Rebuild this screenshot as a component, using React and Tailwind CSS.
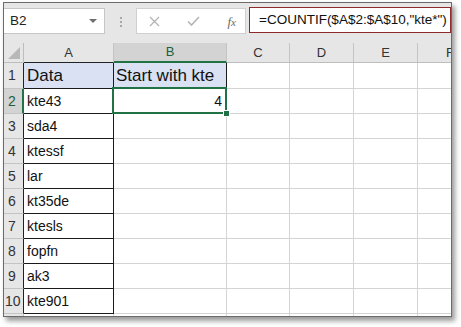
import React from "react";

const font = { fontFamily: '"Liberation Sans", Arial, sans-serif' };

const cols = [
  { key: "A", w: "w-[90px]" },
  { key: "B", w: "w-[113px]" },
  { key: "C", w: "w-[63px]" },
  { key: "D", w: "w-[64px]" },
  { key: "E", w: "w-[64px]" },
];

const data = ["kte43", "sda4", "ktessf", "lar", "kt35de", "ktesls", "fopfn", "ak3", "kte901"];

const Toolbar = () => (
  <div className="h-[40px] bg-[#e6e6e6] flex items-start relative">
    {/* name box */}
    <div className="mt-[5px] h-[26px] w-[101px] bg-white border-y border-r border-[#c6c6c6] flex items-center justify-between pl-[6px] pr-[7px]">
      <span className="text-[13.5px] text-[#222]">B2</span>
      <span className="w-0 h-0 border-x-[4px] border-x-transparent border-t-[4px] border-t-[#6f6f6f]" />
    </div>
    {/* grip dots */}
    <div className="w-[31px] flex flex-col items-center gap-[2px] mt-[14px]">
      <span className="w-[2px] h-[2px] bg-[#a8a8a8]" />
      <span className="w-[2px] h-[2px] bg-[#a8a8a8]" />
      <span className="w-[2px] h-[2px] bg-[#a8a8a8]" />
    </div>
    {/* cancel / enter / fx */}
    <div className="mt-[5px] h-[26px] w-[110px] bg-white border border-[#d0d0d0] flex items-center justify-between pl-[12px] pr-[9px]">
      <svg width="11" height="11" viewBox="0 0 11 11">
        <path d="M1 1 L10 10 M10 1 L1 10" stroke="#b4b4b4" strokeWidth="1.3" fill="none" />
      </svg>
      <svg width="13" height="10" viewBox="0 0 13 10">
        <path d="M1 5.5 L4.5 9 L12 1" stroke="#b4b4b4" strokeWidth="1.6" fill="none" />
      </svg>
      <span
        className="text-[13px] italic text-[#6a6a6a] leading-none"
        style={{ fontFamily: '"Liberation Serif", "Times New Roman", serif' }}
      >
        f<span className="text-[11px]">x</span>
      </span>
    </div>
    {/* formula box */}
    <div className="ml-[3px] mt-[4px] h-[26px] flex-1 bg-white border-[1.5px] border-[#8e2a2a] flex items-center pl-[9px] overflow-hidden">
      <span className="text-[13.5px] text-[#111] whitespace-nowrap">=COUNTIF($A$2:$A$10,"kte*")</span>
    </div>
  </div>
);

const HeaderRow = () => (
  <div className="flex h-[20px]">
    <div className="w-[20px] h-full bg-[#e6e6e6] border-r border-b border-[#bdbdbd] relative">
      <span className="absolute right-[3px] bottom-[3px] w-0 h-0 border-l-[12px] border-l-transparent border-b-[12px] border-b-[#b8b8b8]" />
    </div>
    {cols.map((c) => (
      <div
        key={c.key}
        className={`${c.w} h-full flex items-center justify-center text-[13px] border-r border-[#c4c4c4] ${
          c.key === "B"
            ? "bg-[#d3d3d3] border-b-2 border-b-[#217346] text-[#1e5f3d]"
            : c.key === "A"
            ? "bg-[#e6e6e6] border-b border-b-[#222] text-[#333]"
            : "bg-[#e6e6e6] border-b border-b-[#bdbdbd] text-[#333]"
        }`}
      >
        {c.key}
      </div>
    ))}
    <div className="flex-1 h-full bg-[#e6e6e6] border-b border-[#bdbdbd] flex items-center pl-[28px] text-[13px] text-[#333] overflow-hidden">
      F
    </div>
  </div>
);

const RowHead = ({ n, selected, dark, h }) => (
  <div
    className={`w-[20px] ${h} flex items-center border-b border-[#c4c4c4] ${n >= 10 ? "pl-[1px]" : "pl-[4px]"} text-[14px] ${
      selected
        ? "bg-[#d3d3d3] text-[#1e5f3d] border-r-2 border-r-[#217346]"
        : dark
        ? "bg-[#e6e6e6] text-[#333] border-r border-r-[#222]"
        : "bg-[#e6e6e6] text-[#333] border-r border-r-[#c4c4c4]"
    }`}
  >
    {n}
  </div>
);

const Grid = () => (
  <div className="relative">
    <HeaderRow />
    {/* row 1 */}
    <div className="flex h-[26px]">
      <RowHead n={1} dark h="h-[26px]" />
      <div className="w-[90px] h-full bg-[#d9e1f2] border-r border-b border-[#1a1a1a] flex items-center pl-[3px] text-[17px] text-[#111]">
        Data
      </div>
      <div className="w-[113px] h-full bg-[#d9e1f2] border-r border-b border-[#1a1a1a] flex items-center pl-[2px] text-[17px] text-[#111]">
        Start with kte
      </div>
      <div className="w-[63px] h-full border-r border-b border-[#d4d4d4]" />
      <div className="w-[64px] h-full border-r border-b border-[#d4d4d4]" />
      <div className="w-[64px] h-full border-r border-b border-[#d4d4d4]" />
      <div className="flex-1 h-full border-b border-[#d4d4d4]" />
    </div>
    {data.map((v, i) => (
      <div key={v} className="flex h-[25px]">
        <RowHead n={i + 2} selected={i === 0} dark h="h-[25px]" />
        <div className="w-[90px] h-full border-r border-b border-[#1a1a1a] flex items-center pl-[3px] text-[14px] text-[#111]">
          {v}
        </div>
        <div className="w-[113px] h-full border-r border-b border-[#d4d4d4] flex items-center justify-end pr-[4px] text-[14px] text-[#111]">
          {i === 0 ? "4" : ""}
        </div>
        <div className="w-[63px] h-full border-r border-b border-[#d4d4d4]" />
        <div className="w-[64px] h-full border-r border-b border-[#d4d4d4]" />
        <div className="w-[64px] h-full border-r border-b border-[#d4d4d4]" />
        <div className="flex-1 h-full border-b border-[#d4d4d4]" />
      </div>
    ))}
    {/* partial row 11 */}
    <div className="flex h-[10px]">
      <div className="w-[20px] h-full bg-[#e6e6e6] border-r border-[#c4c4c4]" />
      <div className="w-[90px] h-full border-r border-[#d4d4d4]" />
      <div className="w-[113px] h-full border-r border-[#d4d4d4]" />
      <div className="w-[63px] h-full border-r border-[#d4d4d4]" />
      <div className="w-[64px] h-full border-r border-[#d4d4d4]" />
      <div className="w-[64px] h-full border-r border-[#d4d4d4]" />
    </div>

    {/* selection of B2 */}
    <div className="absolute left-[108px] top-[44px] w-[115px] h-[27px] border-2 border-[#217346]">
      <span className="absolute right-[-5px] bottom-[-5px] w-[7px] h-[7px] bg-[#217346] border border-white" />
    </div>
  </div>
);

export default function App() {
  return (
    <div className="w-[461px] h-[327px] bg-white pl-[3px] pt-[2px]" style={font}>
      <div className="w-[449px] h-[315px] border border-[#6b6b6b] overflow-hidden bg-white shadow-[3px_4px_5px_rgba(0,0,0,0.4)]">
        <Toolbar />
        <Grid />
      </div>
    </div>
  );
}
